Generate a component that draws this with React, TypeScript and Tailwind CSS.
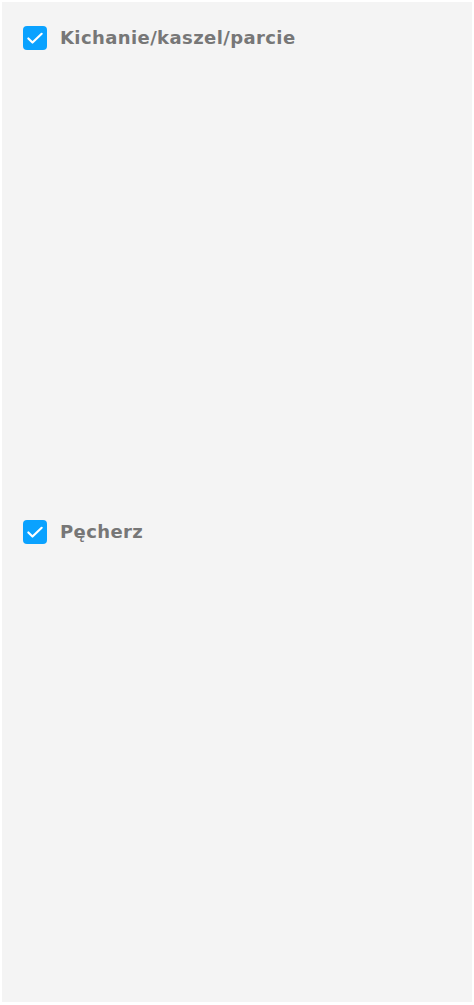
import React from "react";

function Check() {
  return (
    <span className="flex h-[24px] w-[24px] shrink-0 items-center justify-center rounded-[4px] bg-[#0aa2ff]">
      <svg width="20" height="20" viewBox="0 0 24 24" fill="none" stroke="white" strokeWidth="2.6" strokeLinecap="round" strokeLinejoin="round">
        <path d="M4 12.5l5 5L20 7" />
      </svg>
    </span>
  );
}

function Item({ label }: { label: string }) {
  return (
    <div className="h-[494px] px-[21px] pt-[24px]">
      <label className="flex items-center gap-[13px]">
        <Check />
        <span className="text-[18px] font-bold leading-[24px] tracking-[0.4px] text-[#777777]" style={{ fontFamily: '"DejaVu Sans", sans-serif' }}>
          {label}
        </span>
      </label>
    </div>
  );
}

export default function App() {
  return (
    <div className="h-[1005px] w-[474px] bg-white p-[2px]">
      <div className="h-[1000px] w-[470px] bg-[#f4f4f4]">
        <Item label="Kichanie/kaszel/parcie" />
        <Item label="Pęcherz" />
      </div>
    </div>
  );
}
